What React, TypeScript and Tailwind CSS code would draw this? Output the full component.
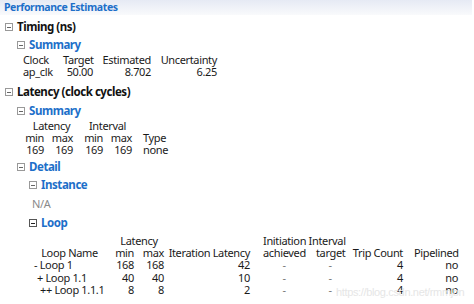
import React from "react";

const font = { fontFamily: '"Noto Sans", "Open Sans", sans-serif' };

function Box({ dark = false }: { dark?: boolean }) {
  return (
    <span
      className={`inline-flex items-center justify-center w-[8px] h-[8px] border ${
        dark ? "border-[#555]" : "border-[#999]"
      } mr-[4px] shrink-0`}
    >
      <span className={`block w-[4px] h-px ${dark ? "bg-[#222]" : "bg-[#666]"}`} />
    </span>
  );
}

function Heading({ label, blue, dark, indent }: { label: string; blue?: boolean; dark?: boolean; indent: string }) {
  return (
    <div className={`flex items-center h-[16px] ${indent}`}>
      <Box dark={dark} />
      <span
        className={`font-bold text-[11.5px] tracking-[-0.45px] leading-none ${blue ? "text-[#1d6fc9]" : "text-[#111]"}`}
      >
        {label}
      </span>
    </div>
  );
}

const loops = [
  { name: "- Loop 1", pad: "pl-0", min: 168, max: 168, it: 42 },
  { name: "+ Loop 1.1", pad: "pl-[3px]", min: 40, max: 40, it: 10 },
  { name: "++ Loop 1.1.1", pad: "pl-[6px]", min: 8, max: 8, it: 2 },
];

export default function App() {
  return (
    <div
      className="relative w-[474px] h-[304px] bg-white overflow-hidden text-[11px] tracking-[-0.35px] text-[#1a1a1a]"
      style={font}
    >
      <div className="h-[15px] w-[472px] bg-gradient-to-b from-[#e6eaf4] to-[#f9fafc] flex items-center pl-[4px]">
        <span className="font-bold text-[10.5px] tracking-[-0.4px] text-[#1d6fc9] leading-none">
          Performance Estimates
        </span>
      </div>

      <div className="mt-[4px]">
        <Heading label="Timing (ns)" indent="pl-[5px]" />
      </div>
      <div className="mt-[2px]">
        <Heading label="Summary" blue indent="pl-[17px]" />
      </div>
      <div className="mt-[1px] pl-[23px] leading-[12px] whitespace-nowrap">
        <div className="flex h-[12px]">
          <span className="w-[40px]">Clock</span>
          <span className="w-[30px] text-right">Target</span>
          <span className="w-[58px] text-right">Estimated</span>
          <span className="w-[66px] text-right">Uncertainty</span>
        </div>
        <div className="flex h-[12px]">
          <span className="w-[40px]">ap_clk</span>
          <span className="w-[30px] text-right">50.00</span>
          <span className="w-[58px] text-right">8.702</span>
          <span className="w-[66px] text-right">6.25</span>
        </div>
      </div>

      <div className="mt-[6px]">
        <Heading label="Latency (clock cycles)" indent="pl-[5px]" />
      </div>
      <div className="mt-[3px]">
        <Heading label="Summary" blue indent="pl-[17px]" />
      </div>
      <div className="mt-[1px] pl-[20px] leading-[12px] whitespace-nowrap">
        <div className="flex h-[12px]">
          <span className="w-[53px] text-center pl-[10px]">Latency</span>
          <span className="w-[59px] text-center pl-[10px]">Interval</span>
        </div>
        <div className="flex h-[12px]">
          <span className="w-[24px] text-right">min</span>
          <span className="w-[29px] text-right">max</span>
          <span className="w-[30px] text-right">min</span>
          <span className="w-[29px] text-right">max</span>
          <span className="pl-[11px]">Type</span>
        </div>
        <div className="flex h-[12px]">
          <span className="w-[24px] text-right">169</span>
          <span className="w-[29px] text-right">169</span>
          <span className="w-[30px] text-right">169</span>
          <span className="w-[29px] text-right">169</span>
          <span className="pl-[11px]">none</span>
        </div>
      </div>

      <div className="mt-[3px]">
        <Heading label="Detail" blue indent="pl-[17px]" />
      </div>
      <div className="mt-[2px]">
        <Heading label="Instance" blue indent="pl-[29px]" />
      </div>
      <div className="mt-[3px] h-[16px] flex items-center pl-[32px] text-[#8a8a8a]">N/A</div>
      <div className="mt-[3px]">
        <Heading label="Loop" blue dark indent="pl-[29px]" />
      </div>

      <div className="mt-[4px] pl-[34px] leading-[12px] whitespace-nowrap">
        <div className="flex h-[12px]">
          <span className="w-[71px]" />
          <span className="w-[59px] text-center pl-[9px]">Latency</span>
          <span className="w-[86px]" />
          <span className="ml-[13px]">Initiation Interval</span>
        </div>
        <div className="flex h-[12px]">
          <span className="w-[71px] text-center">Loop Name</span>
          <span className="w-[29px] text-right">min</span>
          <span className="w-[30px] text-right">max</span>
          <span className="w-[86px] text-right">Iteration Latency</span>
          <span className="ml-[13px] w-[42px] text-center">achieved</span>
          <span className="ml-[11px] w-[28px] text-center">target</span>
          <span className="ml-[8px] w-[51px] text-right">Trip Count</span>
          <span className="ml-[11px] w-[44px] text-right">Pipelined</span>
        </div>
        {loops.map((l) => (
          <div key={l.name} className="flex h-[12.5px] items-center">
            <span className={`w-[71px] ${l.pad}`}>{l.name}</span>
            <span className="w-[29px] text-right">{l.min}</span>
            <span className="w-[30px] text-right">{l.max}</span>
            <span className="w-[86px] text-right">{l.it}</span>
            <span className="ml-[13px] w-[42px] text-center text-[#777]">-</span>
            <span className="ml-[11px] w-[28px] text-center text-[#777]">-</span>
            <span className="ml-[8px] w-[51px] text-right">4</span>
            <span className="ml-[11px] w-[44px] text-right">no</span>
          </div>
        ))}
      </div>

      <div
        className="absolute left-[336px] top-[284px] text-[11px] text-[#e6e6e6] whitespace-nowrap"
        style={{ fontFamily: '"Liberation Sans", sans-serif' }}
      >
        https://blog.csdn.net/rmmjbn
      </div>
    </div>
  );
}
